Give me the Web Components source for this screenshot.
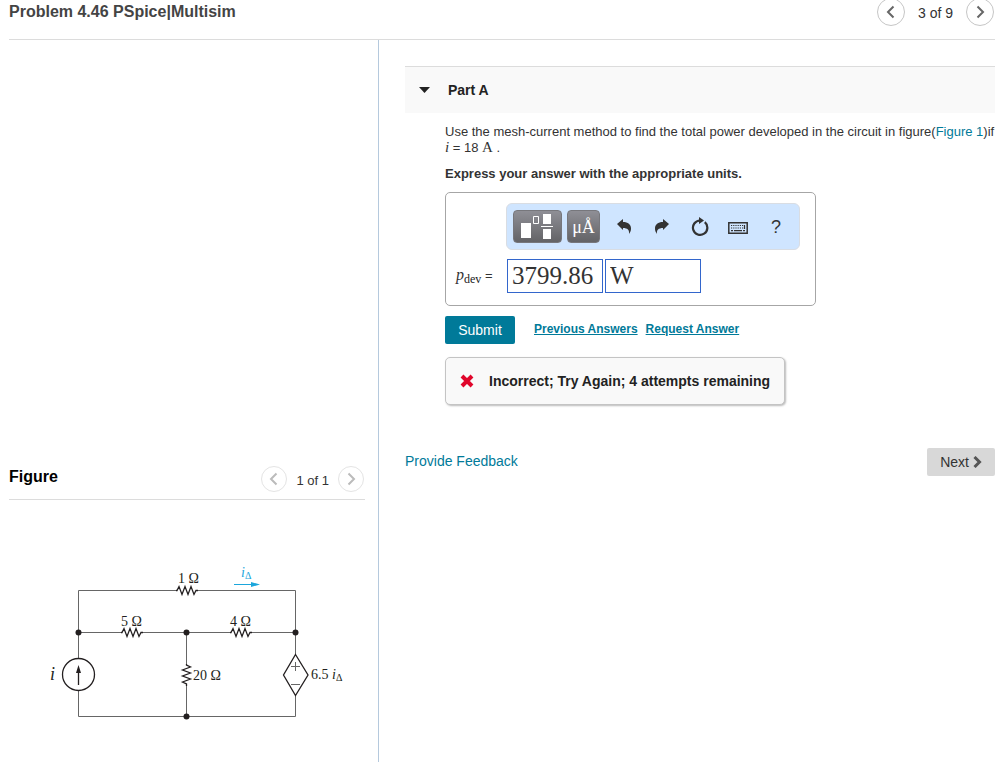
<!DOCTYPE html>
<html lang="en">
<head>
<meta charset="utf-8">
<title>Problem 4.46 PSpice|Multisim</title>
<style>
  body {
    --line: #dcdcdc;
    --link: #007a99;
    --serif: "Liberation Serif", "Times New Roman", serif;
    margin: 0;
    background: #fff;
    color: #333;
    font: 14px/16px "Liberation Sans", Arial, sans-serif;
  }
</style>
</head>
<body>
<problem-page></problem-page>

<script>
/**
 * PageStepper
 * Previous / next round buttons around an "x of y" label.
 */
class PageStepper extends HTMLElement {
  constructor() {
    super();
    this.attachShadow({ mode: 'open' });
  }

  connectedCallback() {
    const off = this.hasAttribute('disabled') ? 'disabled' : '';
    this.shadowRoot.innerHTML = `
      <style>
        :host {
          --size: 28px;
          display: flex;
          align-items: center;
          gap: 13px;
        }
        :host([disabled]) {
          --size: 26px;
          gap: 9px;
          font-size: 13px;
        }
        button {
          width: var(--size);
          height: var(--size);
          padding: 0;
          border: 1px solid #c6c6c6;
          border-radius: 50%;
          background: #fff;
          color: #666;
          display: flex;
          align-items: center;
          justify-content: center;
        }
        button:disabled {
          border-color: #e4e4e4;
          color: #bbb;
        }
        span { padding-top: 3px; }
        svg {
          fill: none;
          stroke: currentColor;
          stroke-width: 2;
        }
      </style>
      <button type="button" aria-label="Previous" ${off}>
        <svg width="10" height="14" viewBox="0 0 10 14"><path d="M7.500 1.500 2 7l5.500 5.500"/></svg>
      </button>
      <span><slot></slot></span>
      <button type="button" aria-label="Next" ${off}>
        <svg width="10" height="14" viewBox="0 0 10 14"><path d="M2.500 1.500 8 7l-5.500 5.500"/></svg>
      </button>
    `;
  }
}

customElements.define('page-stepper', PageStepper);

/**
 * CircuitDiagram
 * Three-mesh circuit with a current source and a dependent voltage source.
 */
class CircuitDiagram extends HTMLElement {
  constructor() {
    super();
    this.attachShadow({ mode: 'open' });
  }

  connectedCallback() {
    this.shadowRoot.innerHTML = `
      <style>
        :host { display: block; }
        svg {
          display: block;
          width: 100%;
          max-width: 480px;
        }
        text {
          font-family: var(--serif);
          font-size: 14px;
          fill: #231f20;
        }
        .it { font-style: italic; }
        .sub { font-size: 10px; }
        .wire { fill: none; stroke: #666; stroke-width: 1; }
        .part { fill: none; stroke: #231f20; stroke-width: 1.3; }
        .dot { fill: #231f20; }
        .cyan { fill: #1ba6dc; }
      </style>
      <svg viewBox="9 500 356 262" role="img" aria-label="Circuit">
        <!-- wires -->
        <path class="wire" d="M78.500 658V590.500H176M198 590.500H295.500V655M78.500 632.500H121M143 632.500H230M252 632.500H295.500M78.500 691V716.500H295.500V695M186.500 632V664M186.500 686V716"/>
        <!-- resistors -->
        <path class="part" d="M176 590.500h1l2-4 3 8 3-8 3 8 3-8 3 8 2-4h2"/>
        <path class="part" d="M121 632.500h1l2-4 3 8 3-8 3 8 3-8 3 8 2-4h2"/>
        <path class="part" d="M230 632.500h1l2-4 3 8 3-8 3 8 3-8 3 8 2-4h2"/>
        <path class="part" d="M186.500 664v1l4 2-8 3 8 3-8 3 8 3-8 3 4 2v2"/>
        <!-- sources -->
        <circle class="part" cx="78.500" cy="674.500" r="16"/>
        <path class="part" d="M78.500 685V670"/>
        <path class="dot" d="m78.500 665 2.500 8h-5z"/>
        <path class="part" d="m295.500 654.500 12.500 20.500-12.500 20.500L283.500 675z"/>
        <path class="wire" d="M291 666.500h9M295.500 662v9M291 684.500h9"/>
        <!-- nodes -->
        <circle class="dot" cx="78.500" cy="632.500" r="3"/>
        <circle class="dot" cx="186.500" cy="632.500" r="3"/>
        <circle class="dot" cx="295.500" cy="632.500" r="3"/>
        <circle class="dot" cx="186.500" cy="716.500" r="3"/>
        <!-- labels -->
        <text x="178" y="583">1 Ω</text>
        <text x="121" y="626">5 Ω</text>
        <text x="230" y="626">4 Ω</text>
        <text x="193" y="680">20 Ω</text>
        <text x="311" y="679">6.5 <tspan class="it">i</tspan><tspan class="sub" dy="2">Δ</tspan></text>
        <text class="it" x="50" y="680" style="font-size: 18px">i</text>
        <text class="cyan" x="241" y="577"><tspan class="it">i</tspan><tspan class="sub" dy="2">Δ</tspan></text>
        <path d="M234 584.500h18" stroke="#1ba6dc"/>
        <path class="cyan" d="m251 582 9 2.500-9 2.500z"/>
      </svg>
    `;
  }
}

customElements.define('circuit-diagram', CircuitDiagram);

/**
 * FigurePanel
 * Heading with a stepper, and the figure passed in below it.
 */
class FigurePanel extends HTMLElement {
  constructor() {
    super();
    this.attachShadow({ mode: 'open' });
  }

  connectedCallback() {
    this.shadowRoot.innerHTML = `
      <style>
        :host { display: block; }
        header {
          display: flex;
          justify-content: space-between;
          align-items: center;
          padding: 0 1px 7px 0;
          border-bottom: 1px solid var(--line);
        }
        h2 {
          margin: 0;
          padding-bottom: 4px;
          color: #000;
          font-size: 16px;
          line-height: 20px;
        }
      </style>
      <header>
        <h2>Figure</h2>
        <page-stepper disabled>1 of 1</page-stepper>
      </header>
      <slot></slot>
    `;
  }
}

customElements.define('figure-panel', FigurePanel);

/**
 * MathToolbar
 * Template, unit, undo, redo, reset, keyboard and help buttons.
 */
class MathToolbar extends HTMLElement {
  constructor() {
    super();
    this.attachShadow({ mode: 'open' });
  }

  connectedCallback() {
    this.shadowRoot.innerHTML = `
      <style>
        :host {
          display: flex;
          align-items: center;
          box-sizing: border-box;
          height: 47px;
          padding: 0 3px 0 6px;
          border: 1px solid #d9dde3;
          border-radius: 6px;
          background: #cfe5ff;
        }
        button {
          display: flex;
          align-items: center;
          justify-content: center;
          width: 38px;
          height: 33px;
          padding: 0;
          border: 0;
          background: none;
          color: #333;
          font: 18px/20px "Liberation Sans", Arial, sans-serif;
        }
        .dark {
          width: 33px;
          margin-right: 5px;
          border: 1px solid #77777c;
          border-radius: 4px;
          background: linear-gradient(#8f8f96, #636366);
          color: #fff;
          font: 18px/20px var(--serif);
        }
        .wide { width: 49px; }
      </style>
      <button type="button" class="dark wide" aria-label="Templates">
        <svg width="34" height="28" viewBox="0 0 34 28">
          <path fill="#fff" d="M0 10h10v15H0zM22 1h8v10h-8zM22 16h8v10h-8zM20 13h12v1H20z"/>
          <path fill="none" stroke="#fff" d="M12.500 3.500h5v7h-5z"/>
        </svg>
      </button>
      <button type="button" class="dark" aria-label="Units">μÅ</button>
      <button type="button" aria-label="Undo">
        <svg width="14" height="16" viewBox="0 0 14 16"><path fill="#333" d="M0 5 6 0v3c5 0 8 2.500 8 6.500 0 2-.5 3.500-2 5.500.6-4-1.500-6-6-6v2z"/></svg>
      </button>
      <button type="button" aria-label="Redo">
        <svg width="14" height="16" viewBox="0 0 14 16"><path fill="#333" d="M14 5 8 0v3c-5 0-8 2.500-8 6.500 0 2 .5 3.500 2 5.500-.6-4 1.500-6 6-6v2z"/></svg>
      </button>
      <button type="button" aria-label="Reset">
        <svg width="18" height="20" viewBox="0 0 18 20">
          <path fill="none" stroke="#333" stroke-width="2.200" d="M13.800 5.200A7.200 7.200 0 1 1 9 3.500"/>
          <path fill="#333" d="M8 0l5 3.500L8 7z"/>
        </svg>
      </button>
      <button type="button" aria-label="Keyboard">
        <svg width="20" height="16" viewBox="0 0 20 16">
          <path fill="none" stroke="#333" stroke-width="1.500" d="M.8 3.800h18.400v10.400H.8z"/>
          <path stroke="#333" stroke-width="1.200" stroke-dasharray="1.200 1" d="M3 6.500h14M3 9h14"/>
          <path stroke="#333" stroke-width="1.200" d="M3 11.700h2M6 11.700h8M15 11.700h2M16.500 6v4"/>
        </svg>
      </button>
      <button type="button" aria-label="Help">?</button>
    `;
  }
}

customElements.define('math-toolbar', MathToolbar);

/**
 * AnswerForm
 * Answer box with value and unit fields, submit row and the result message.
 */
class AnswerForm extends HTMLElement {
  constructor() {
    super();
    this.attachShadow({ mode: 'open' });
  }

  connectedCallback() {
    this.shadowRoot.innerHTML = `
      <style>
        :host { display: block; }
        .box {
          display: grid;
          grid-template-columns: 50px 294px;
          row-gap: 9px;
          width: max-content;
          padding: 10px 15px 12px 10px;
          border: 1px solid #a6a6a6;
          border-radius: 5px;
        }
        math-toolbar { grid-column: 2; }
        label {
          align-self: center;
          font-size: 13px;
        }
        label .var {
          font: italic 16px/16px var(--serif);
        }
        label sub {
          font: 12px/12px var(--serif);
          vertical-align: -3px;
          color: #222;
        }
        .fields {
          display: flex;
          gap: 2px;
          padding-left: 1px;
        }
        input {
          box-sizing: border-box;
          width: 96px;
          height: 34px;
          padding: 0 4px;
          border: 1px solid #36c;
          background: #fff;
          color: #333;
          font: 25px/30px var(--serif);
        }
        .actions {
          display: flex;
          align-items: center;
          margin: 10px 0 13px;
        }
        .submit {
          width: 70px;
          height: 28px;
          margin-right: 19px;
          padding: 0;
          border: 0;
          border-radius: 2px;
          background: var(--link);
          color: #fff;
          font: inherit;
        }
        .actions a {
          margin-right: 8px;
          padding-bottom: 2px;
          color: var(--link);
          font-size: 12px;
          font-weight: bold;
        }
        .result {
          display: flex;
          align-items: center;
          gap: 15px;
          box-sizing: border-box;
          width: max-content;
          height: 48px;
          padding: 0 14px;
          border: 1px solid #c4c4c4;
          border-radius: 5px;
          background: #f9f9f9;
          box-shadow: 1px 1px 2px #bbb;
          color: #222;
          font-weight: bold;
        }
      </style>
      <div class="box">
        <math-toolbar></math-toolbar>
        <label for="value"><span class="var">p</span><sub>dev</sub> =</label>
        <div class="fields">
          <input id="value" type="text" value="3799.86">
          <input id="unit" type="text" value="W" aria-label="Units">
        </div>
      </div>
      <div class="actions">
        <button type="button" class="submit">Submit</button>
        <a href="#previous">Previous Answers</a>
        <a href="#request">Request Answer</a>
      </div>
      <div class="result" role="status">
        <svg width="14" height="14" viewBox="0 0 14 14"><path stroke="#e0062b" stroke-width="4" d="m2 2 10 10M12 2 2 12"/></svg>
        <span>Incorrect; Try Again; 4 attempts remaining</span>
      </div>
    `;
  }
}

customElements.define('answer-form', AnswerForm);

/**
 * ProblemPart
 * Grey heading bar with a disclosure arrow; content goes in the slot.
 */
class ProblemPart extends HTMLElement {
  constructor() {
    super();
    this.attachShadow({ mode: 'open' });
  }

  connectedCallback() {
    this.shadowRoot.innerHTML = `
      <style>
        :host { display: block; }
        h2 {
          margin: 0;
          border-top: 1px solid var(--line);
          background: #f9f9f9;
        }
        button {
          display: flex;
          align-items: center;
          gap: 18px;
          width: 100%;
          height: 46px;
          padding: 0 14px;
          border: 0;
          background: none;
          color: #222;
          font: inherit;
          font-size: 14px;
        }
        .content { padding: 11px 0 0 40px; }
      </style>
      <h2>
        <button type="button" aria-expanded="true">
          <svg width="11" height="6" viewBox="0 0 11 6"><path fill="#222" d="M0 0h11L5.500 6z"/></svg>
          ${this.getAttribute('heading')}
        </button>
      </h2>
      <div class="content"><slot></slot></div>
    `;
  }
}

customElements.define('problem-part', ProblemPart);

/**
 * ProblemPage
 * Title bar, figure column on the left and the question on the right.
 */
class ProblemPage extends HTMLElement {
  constructor() {
    super();
    this.attachShadow({ mode: 'open' });
  }

  connectedCallback() {
    this.shadowRoot.innerHTML = `
      <style>
        :host {
          display: flex;
          flex-direction: column;
          box-sizing: border-box;
          min-height: 100vh;
          padding: 0 11px 0 9px;
        }
        .title {
          display: flex;
          align-items: center;
          justify-content: space-between;
          height: 23px;
          padding: 0 1px 16px 0;
          border-bottom: 1px solid var(--line);
        }
        h1 {
          margin: 0;
          color: #444;
          font-size: 16px;
          line-height: 20px;
        }
        .columns {
          display: flex;
          flex: 1;
        }
        aside {
          display: flex;
          flex-direction: column;
          justify-content: flex-end;
          box-sizing: border-box;
          width: 370px;
          flex: none;
          padding-right: 13px;
          border-right: 1px solid #b5c9dd;
        }
        main {
          flex: 1;
          min-width: 0;
          padding: 26px 0 0 26px;
        }
        p {
          margin: 0 0 10px;
          font-size: 13px;
        }
        a {
          color: var(--link);
          text-decoration: none;
        }
        .math { font: 15px/15px var(--serif); }
        i.math { font-style: italic; }
        .foot {
          display: flex;
          align-items: center;
          justify-content: space-between;
          margin-top: 43px;
        }
        .foot a { padding-bottom: 2px; }
        .next {
          display: flex;
          align-items: center;
          gap: 4px;
          height: 28px;
          padding: 0 13px;
          border: 0;
          border-radius: 2px;
          background: #d8d8d8;
          color: #333;
          font: inherit;
        }
      </style>
      <header class="title">
        <h1>Problem 4.46 PSpice|Multisim</h1>
        <page-stepper>3 of 9</page-stepper>
      </header>
      <div class="columns">
        <aside>
          <figure-panel>
            <circuit-diagram></circuit-diagram>
          </figure-panel>
        </aside>
        <main>
          <problem-part heading="Part A">
            <p>Use the mesh-current method to find the total power developed in the circuit in figure(<a href="#figure">Figure 1</a>)if <i class="math">i</i> = 18 <span class="math">A</span> .</p>
            <p><b>Express your answer with the appropriate units.</b></p>
            <answer-form></answer-form>
          </problem-part>
          <div class="foot">
            <a href="#feedback">Provide Feedback</a>
            <button type="button" class="next">Next
              <svg width="9" height="12" viewBox="0 0 9 12"><path fill="none" stroke="#555" stroke-width="3" d="m1.500 1 5 5-5 5"/></svg>
            </button>
          </div>
        </main>
      </div>
    `;
  }
}

customElements.define('problem-page', ProblemPage);
</script>
</body>
</html>
